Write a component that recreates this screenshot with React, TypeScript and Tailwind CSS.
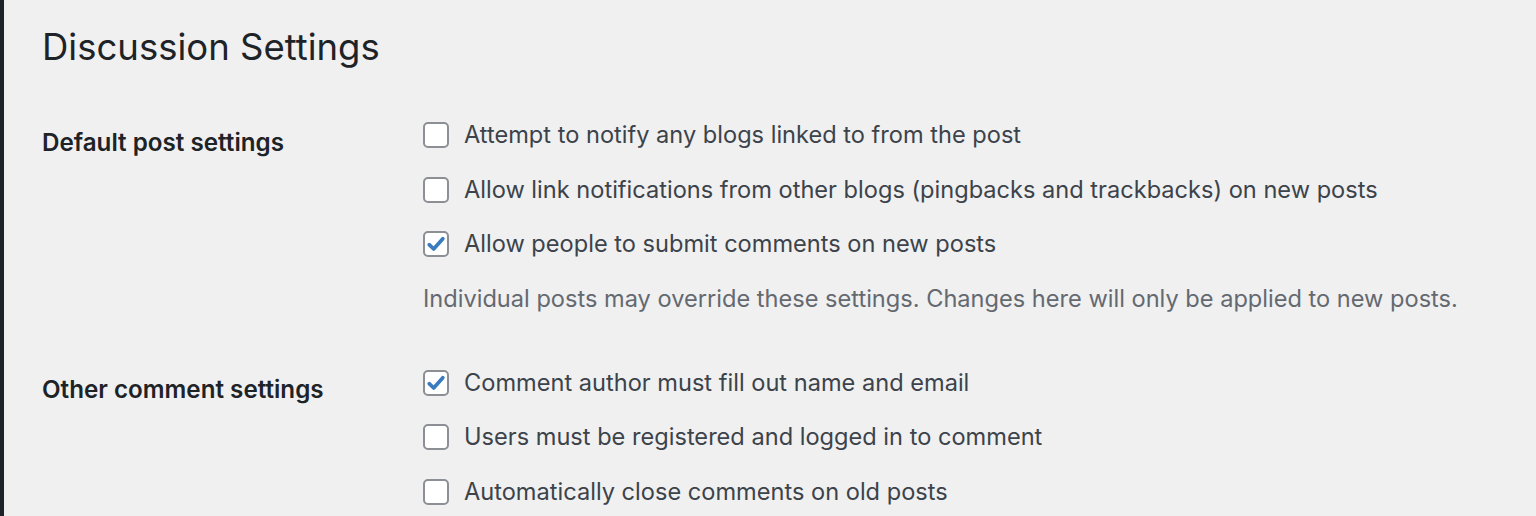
import React from "react";

function Box({ checked }: { checked?: boolean }) {
  return (
    <span className="flex h-[26px] w-[26px] shrink-0 items-center justify-center rounded-[5px] border-2 border-[#8c8f94] bg-white">
      {checked && (
        <svg width="22" height="22" viewBox="0 0 20 20">
          <path d="M3.8 10.6 L7.9 14.6 L16.2 5.2" fill="none" stroke="#3a7bbf" strokeWidth="3.3" strokeLinecap="round" strokeLinejoin="round" />
        </svg>
      )}
    </span>
  );
}

function Row({ text, checked }: { text: string; checked?: boolean }) {
  return (
    <div className="flex h-[54.5px] items-center gap-[15px]">
      <Box checked={checked} />
      <span className="text-[23.6px] leading-none text-[#3c434a]">{text}</span>
    </div>
  );
}

export default function App() {
  return (
    <div className="flex h-[516px] w-full overflow-hidden bg-[#f0f0f1]" style={{ fontFamily: "Inter, 'Noto Sans', sans-serif" }}>
      <div className="w-[4px] shrink-0 bg-[#1d2327]" />
      <div className="flex-1 pl-[38px]">
        <h1 className="pt-[24px] text-[36.5px] leading-[46px] font-normal text-[#1d2327]">Discussion Settings</h1>
        <div className="mt-[38px] flex">
          <div className="w-[381px] shrink-0 pt-[20px] text-[24.2px] leading-[30px] font-semibold text-[#1d2327]">Default post settings</div>
          <div className="flex flex-col">
            <Row text="Attempt to notify any blogs linked to from the post" />
            <Row text="Allow link notifications from other blogs (pingbacks and trackbacks) on new posts" />
            <Row checked text="Allow people to submit comments on new posts" />
            <p className="pt-[12px] text-[23.6px] leading-[30px] text-[#646970]">Individual posts may override these settings. Changes here will only be applied to new posts.</p>
          </div>
        </div>
        <div className="mt-[42px] flex">
          <div className="w-[381px] shrink-0 pt-[19px] text-[24.2px] leading-[30px] font-semibold text-[#1d2327]">Other comment settings</div>
          <div className="flex flex-col">
            <Row checked text="Comment author must fill out name and email" />
            <Row text="Users must be registered and logged in to comment" />
            <Row text="Automatically close comments on old posts" />
          </div>
        </div>
      </div>
    </div>
  );
}
